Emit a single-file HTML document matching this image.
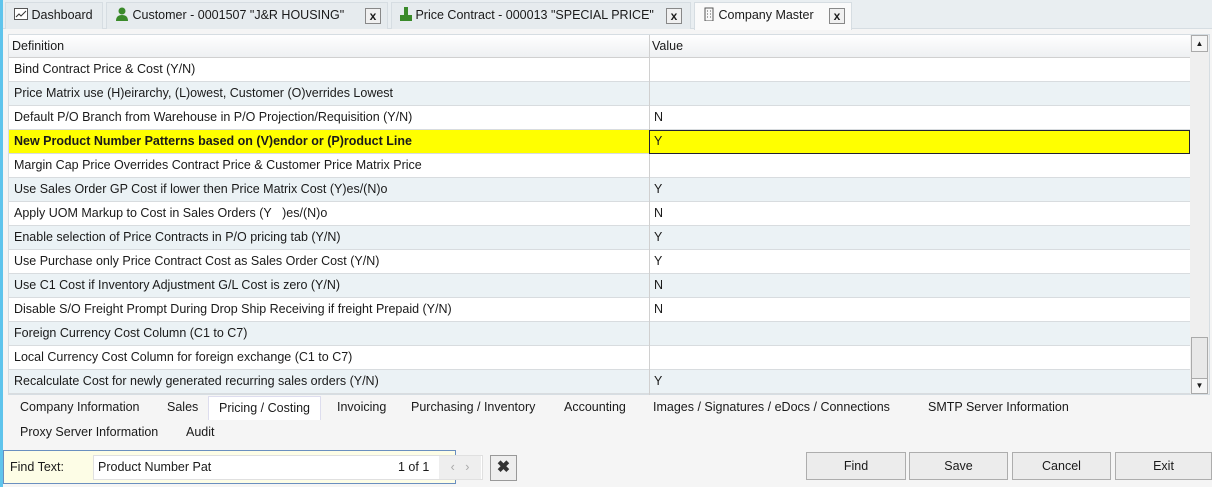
<!DOCTYPE html>
<html><head><style>
*{box-sizing:border-box;margin:0;padding:0}
body{width:1212px;height:487px;background:#f5f5f5;font-family:"Liberation Sans",sans-serif;font-size:12.5px;color:#1a1a1a;position:relative;overflow:hidden}
.abs{position:absolute}
.lb{left:0;top:0;width:3px;height:487px;background:#5fc4ec}
.tabbar{left:3px;top:0;width:1209px;height:29px;background:#e9eef1;border-bottom:1px solid #d6dde2}
.tab{position:absolute;top:2px;height:27px;background:#e6ebee;border:1px solid #d6dde2;border-bottom:none;line-height:25px;padding-left:8px;white-space:nowrap}
.tab.act{background:#fafafa;height:28px}
.x{position:absolute;top:5px;width:16px;height:16px;border:1px solid #888;background:#f0f0f0;font-weight:bold;font-size:12px;line-height:14px;text-align:center}
.grid{left:8px;top:34px;width:1202px;height:361px;border:1px solid #d6dde2;background:#fff}
.hdr{position:absolute;left:0;top:0;width:1181px;height:23px;background:linear-gradient(#fff,#eef0f2);border-bottom:1px solid #d0d0d0}
.row{position:absolute;left:0;width:1181px;height:24px;border-bottom:1px solid #d8dcdf;line-height:23px}
.row span{position:absolute;left:5px}
.row i{position:absolute;left:645px;font-style:normal}
.vd{position:absolute;left:640px;top:0;width:1px;height:360px;background:#d0d0d0}
.sb{position:absolute;left:1181px;top:0;width:19px;height:359px;background:#efefef}
.btn{position:absolute;top:452px;height:28px;border:1px solid #adadad;background:#ececec;text-align:center;line-height:26px}
.bt{position:absolute;top:396px;height:24px;line-height:22px;padding:0 10px}
</style></head><body>
<div class="abs lb"></div>
<div class="abs tabbar"></div>
<div class="tab" style="left:5px;width:98px">
<svg width="14" height="12" style="vertical-align:-1px"><rect x="0.5" y="0.5" width="13" height="11" fill="#fff" stroke="#555"/><path d="M2 9 L5 6 L7 8 L12 3" stroke="#333" fill="none"/></svg> Dashboard</div>
<div class="tab" style="left:106px;width:282px"><svg width="14" height="14" style="vertical-align:-2px"><circle cx="7" cy="4" r="3.5" fill="#3a8a2a"/><path d="M1 14 Q1 8 7 8 Q13 8 13 14Z" fill="#3a8a2a"/></svg> Customer - 0001507 "J&amp;R HOUSING"<div class="x" style="left:258px">x</div></div>
<div class="tab" style="left:391px;width:300px"><svg width="12" height="14" style="vertical-align:-2px"><rect x="4" y="0" width="4" height="8" fill="#3a8a2a"/><rect x="0" y="8" width="12" height="6" fill="#3a8a2a"/></svg> Price Contract - 000013 "SPECIAL PRICE"<div class="x" style="left:274px">x</div></div>
<div class="tab act" style="left:694px;width:158px"><svg width="12" height="14" style="vertical-align:-2px"><rect x="2" y="1" width="8" height="13" fill="none" stroke="#555"/><path d="M4 4h1M7 4h1M4 7h1M7 7h1M4 10h1M7 10h1" stroke="#555"/></svg> Company Master<div class="x" style="left:134px">x</div></div>
<div class="abs grid">
<div class="hdr"><span style="position:absolute;left:3px;top:4px">Definition</span><span style="position:absolute;left:643px;top:4px">Value</span></div>
<div class="row" style="top:23px;background:#fff"><span>Bind Contract Price &amp; Cost (Y/N)</span></div>
<div class="row" style="top:47px;background:#ebf2f5"><span>Price Matrix use (H)eirarchy, (L)owest, Customer (O)verrides Lowest</span></div>
<div class="row" style="top:71px;background:#fff"><span>Default P/O Branch from Warehouse in P/O Projection/Requisition (Y/N)</span><i>N</i></div>
<div class="row" style="top:95px;background:#ffff00;font-weight:bold"><span>New Product Number Patterns based on (V)endor or (P)roduct Line</span></div>
<div class="abs" style="left:640px;top:95px;width:541px;height:24px;border:1px solid #223;background:#ffff00;line-height:21px;padding-left:4px;z-index:2">Y</div>
<div class="row" style="top:119px;background:#fff"><span>Margin Cap Price Overrides Contract Price &amp; Customer Price Matrix Price</span></div>
<div class="row" style="top:143px;background:#ebf2f5"><span>Use Sales Order GP Cost if lower then Price Matrix Cost (Y)es/(N)o</span><i>Y</i></div>
<div class="row" style="top:167px;background:#fff"><span>Apply UOM Markup to Cost in Sales Orders (Y&nbsp;&nbsp;&nbsp;)es/(N)o</span><i>N</i></div>
<div class="row" style="top:191px;background:#ebf2f5"><span>Enable selection of Price Contracts in P/O pricing tab (Y/N)</span><i>Y</i></div>
<div class="row" style="top:215px;background:#fff"><span>Use Purchase only Price Contract Cost as Sales Order Cost (Y/N)</span><i>Y</i></div>
<div class="row" style="top:239px;background:#ebf2f5"><span>Use C1 Cost if Inventory Adjustment G/L Cost is zero (Y/N)</span><i>N</i></div>
<div class="row" style="top:263px;background:#fff"><span>Disable S/O Freight Prompt During Drop Ship Receiving if freight Prepaid (Y/N)</span><i>N</i></div>
<div class="row" style="top:287px;background:#ebf2f5"><span>Foreign Currency Cost Column (C1 to C7)</span></div>
<div class="row" style="top:311px;background:#fff"><span>Local Currency Cost Column for foreign exchange (C1 to C7)</span></div>
<div class="row" style="top:335px;background:#ebf2f5"><span>Recalculate Cost for newly generated recurring sales orders (Y/N)</span><i>Y</i></div>
<div class="vd"></div>
<div class="sb">
<div style="position:absolute;left:1px;top:0;width:17px;height:17px;border:1px solid #aaa;background:#f5f5f5;font-size:8px;text-align:center;line-height:15px">▲</div>
<div style="position:absolute;left:1px;top:302px;width:17px;height:42px;border:1px solid #aaa;background:#e8e8e8"></div>
<div style="position:absolute;left:1px;top:343px;width:17px;height:16px;border:1px solid #aaa;background:#f5f5f5;font-size:8px;text-align:center;line-height:14px">▼</div>
</div>
</div>
<div class="bt" style="left:10px">Company Information</div>
<div class="bt" style="left:157px">Sales</div>
<div class="bt" style="left:208px;background:#fff;border:1px solid #dde;border-bottom:none">Pricing / Costing</div>
<div class="bt" style="left:327px">Invoicing</div>
<div class="bt" style="left:401px">Purchasing / Inventory</div>
<div class="bt" style="left:554px">Accounting</div>
<div class="bt" style="left:643px">Images / Signatures / eDocs / Connections</div>
<div class="bt" style="left:918px">SMTP Server Information</div>
<div class="bt" style="left:10px;top:421px">Proxy Server Information</div>
<div class="bt" style="left:176px;top:421px">Audit</div>
<div class="abs" style="left:3px;top:450px;width:453px;height:34px;background:#fdfde6;border:1px solid #6a8fbf"></div>
<div class="abs" style="left:10px;top:460px">Find Text:</div>
<div class="abs" style="left:93px;top:455px;width:390px;height:25px;background:#fff;border:1px solid #e0e0e0;line-height:23px;padding-left:4px">Product Number Pat<span style="position:absolute;left:304px">1 of 1</span><span style="position:absolute;left:345px;width:42px;height:23px;background:#eee;color:#aaa;text-align:center">‹ &nbsp; ›</span></div>
<div class="abs" style="left:490px;top:455px;width:27px;height:26px;border:1px solid #999;background:#eee;text-align:center;font-weight:bold;font-size:16px;line-height:24px;color:#333">✖</div>
<div class="btn" style="left:806px;width:100px">Find</div>
<div class="btn" style="left:909px;width:99px">Save</div>
<div class="btn" style="left:1012px;width:99px">Cancel</div>
<div class="btn" style="left:1115px;width:97px">Exit</div>
</body></html>
